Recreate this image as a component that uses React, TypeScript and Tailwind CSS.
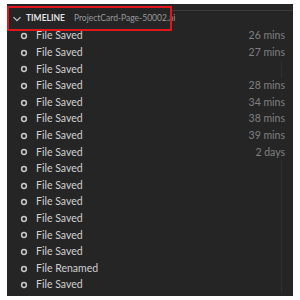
const rows: { label: string; time?: string }[] = [
  { label: "File Saved", time: "26 mins" },
  { label: "File Saved", time: "27 mins" },
  { label: "File Saved" },
  { label: "File Saved", time: "28 mins" },
  { label: "File Saved", time: "34 mins" },
  { label: "File Saved", time: "38 mins" },
  { label: "File Saved", time: "39 mins" },
  { label: "File Saved", time: "2 days" },
  { label: "File Saved" },
  { label: "File Saved" },
  { label: "File Saved" },
  { label: "File Saved" },
  { label: "File Saved" },
  { label: "File Saved" },
  { label: "File Renamed" },
  { label: "File Saved" },
];

function Ring() {
  return (
    <svg width="8" height="8" viewBox="0 0 8 8" className="shrink-0">
      <circle cx="4" cy="4" r="2.4" fill="none" stroke="#c8c8c8" strokeWidth="1.5" />
    </svg>
  );
}

export default function App() {
  return (
    <div className="w-[300px] h-[300px] bg-white pt-[4px] pb-[4px] pl-[7px] pr-[7px] font-['Lato',sans-serif]">
      <div className="relative w-full h-full bg-[#252526] flex flex-col">
        {/* tab line + scroll shadow */}
        <div className="absolute left-[165px] right-0 top-[6px] h-px bg-[#3a3a3a]" />
        <div className="absolute left-[274px] top-[50px] bottom-[4px] w-px bg-[#303030]" />

        {/* header */}
        <div className="h-[24px] pt-[5px] flex items-center pl-[5px] gap-[4px] whitespace-nowrap">
          <svg width="10" height="10" viewBox="0 0 10 10" className="shrink-0">
            <path d="M1.5 3.2 L5 6.7 L8.5 3.2" fill="none" stroke="#c8c8c8" strokeWidth="1.2" />
          </svg>
          <span className="text-[8.5px] font-bold text-[#e2e2e2] leading-none">TIMELINE</span>
          <span className="text-[8.5px] text-[#9a9a9a] ml-[5px] leading-none">ProjectCard-Page-50002.ai</span>
        </div>

        {/* list */}
        <div className="relative flex flex-col">
          {rows.map((r, i) => (
            <div key={i} className="h-[16.6px] flex items-center pl-[13px] pr-[8px] gap-[8px]">
              <Ring />
              <span className="text-[10.5px] text-[#d0d0d0] flex-1">{r.label}</span>
              {r.time && <span className="text-[10.5px] text-[#808080] bg-[#252526]">{r.time}</span>}
            </div>
          ))}
        </div>

        {/* annotation box */}
        <div className="absolute left-0 top-[2px] w-[165px] h-[25px] border-2 border-[#e0161c] pointer-events-none" />
      </div>
    </div>
  );
}
